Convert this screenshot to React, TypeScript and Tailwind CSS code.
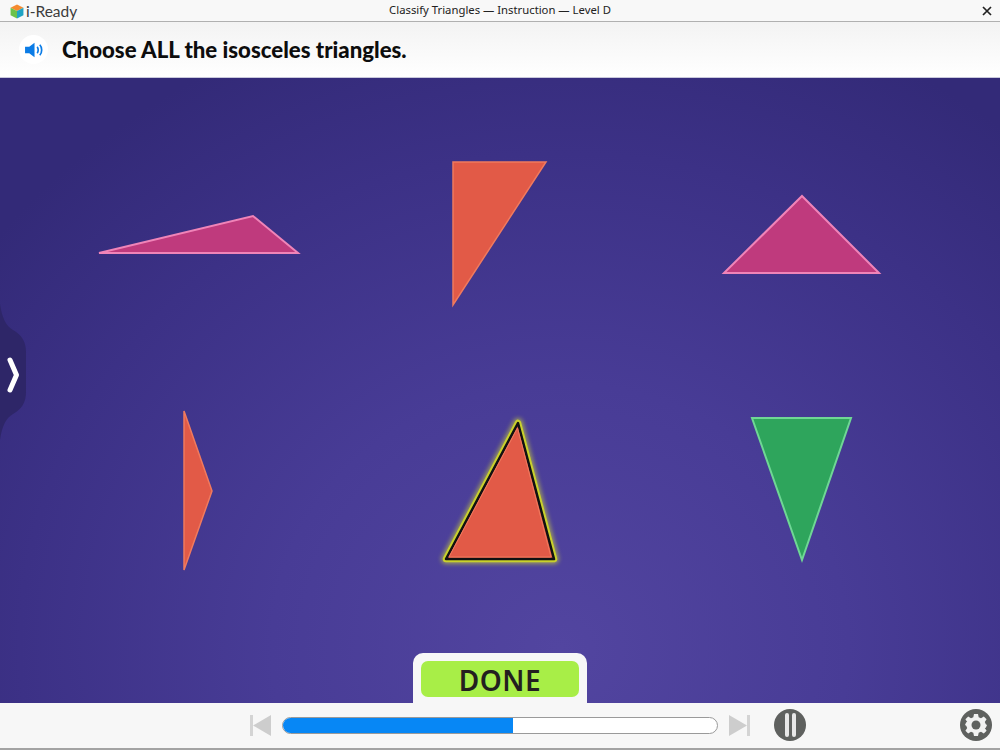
const App = () => {
  return (
    <div className="flex h-[750px] w-[1000px] flex-col overflow-hidden bg-[#f7f7f7] font-['Noto_Sans',sans-serif]">
      <TitleBar />
      <Prompt />
      <main className="relative flex-1 bg-[radial-gradient(ellipse_720px_660px_at_560px_570px,#5245a0_0%,#483c96_40%,#3c3186_75%,#332a78_100%)]">
        <Shapes />
        <SideTab />
        <div className="absolute bottom-0 left-[413px] h-[50px] w-[174px] rounded-t-[10px] bg-[#f7f7f7] px-2 pt-2">
          <button className="flex h-9 w-full items-center justify-center rounded-[7px] bg-[#a8ee47] pt-0.5 text-[28px] font-semibold tracking-[0.5px] text-[#231f20]">
            DONE
          </button>
        </div>
      </main>
      <Footer />
    </div>
  );
};

const TitleBar = () => (
  <header className="relative flex h-[22px] shrink-0 items-center justify-center border-b border-[#b0b0b0] bg-[#f8f8f8]">
    <div className="absolute left-[10px] top-[3px] flex items-center gap-[2px]">
      <svg width="14" height="15" viewBox="0 0 13 14">
        <path d="M6.5 0.5 12.5 3.5 6.5 6.5 0.5 3.5Z" fill="#f58a2e" />
        <path d="M0.5 3.5 6.5 6.5V13.5L0.5 10.5Z" fill="#6cc24a" />
        <path d="M12.5 3.5 6.5 6.5V13.5L12.5 10.5Z" fill="#1fa3c4" />
      </svg>
      <span className="font-['Lato',sans-serif] text-[15.500px] leading-[16px] text-[#3c3c3c]">i-Ready</span>
    </div>
    <span className="text-[11.300px] text-[#222]">Classify Triangles — Instruction — Level D</span>
    <svg className="absolute right-[8px] top-[6px]" width="10" height="10" viewBox="0 0 10 10">
      <path d="M1 1 9 9M9 1 1 9" stroke="#222" strokeWidth="1.7" />
    </svg>
  </header>
);

const Prompt = () => (
  <section className="flex h-[56px] shrink-0 items-center border-b border-[#c9c9dc] bg-gradient-to-b from-[#f3f3f3] to-white pl-[19px]">
    <div className="flex h-[29px] w-[29px] items-center justify-center rounded-full bg-white">
      <svg width="20" height="18" viewBox="0 0 19 16">
        <path d="M1 5H5L10 1V15L5 11H1Z" fill="#0b7ce6" />
        <path d="M12.5 5C13.8 6.5 13.8 9.5 12.5 11" fill="none" stroke="#0b7ce6" strokeWidth="1.6" />
        <path d="M15 3C17.4 5.5 17.4 10.500 15 13" fill="none" stroke="#0b7ce6" strokeWidth="1.6" />
      </svg>
    </div>
    <h1 className="ml-[14px] font-['Lato',sans-serif] text-[22.200px] font-black text-[#0d0d0d]">
      Choose ALL the isosceles triangles.
    </h1>
  </section>
);

const Shapes = () => (
  <svg className="absolute inset-0 h-full w-full" viewBox="0 78 1000 625">
    <polygon points="99,253 253,216 298,253" fill="#bf3a7d" stroke="#f084b8" strokeWidth="2" />
    <polygon points="453,162 546,162 453,305" fill="#e25a47" stroke="#f07a5e" strokeWidth="1.5" />
    <polygon points="802,196 879,273 724,273" fill="#bf3a7d" stroke="#f084b8" strokeWidth="2" />
    <polygon points="184,411 212,491 184,570" fill="#e25a47" stroke="#f07a5e" strokeWidth="1.5" />
    <polygon points="752,418 851,418 802,560" fill="#2ea55c" stroke="#6fd795" strokeWidth="2" />
    <polygon points="518,423 554,559 446,559" fill="none" stroke="#d8e02f" strokeWidth="10" strokeLinejoin="round" opacity="0.55" style={{ filter: "blur(2px)" }} />
    <polygon points="518,423 554,559 446,559" fill="none" stroke="#c9d12c" strokeWidth="6.500" strokeLinejoin="round" />
    <polygon points="518,423 554,559 446,559" fill="#e25a47" stroke="#111" strokeWidth="2.5" strokeLinejoin="round" />
    <polygon points="517.500,428 551,557 449,557" fill="none" stroke="#f07a5e" strokeWidth="1" />
  </svg>
);

const SideTab = () => (
  <svg className="absolute left-0 top-[226px]" width="26" height="136" viewBox="0 0 26 136">
    <path d="M0 0C2 14 6 22 13 26 22 31 26 38 26 48V88C26 98 22 105 13 110 6 114 2 122 0 136Z" fill="#2e2668" />
    <path d="M10 56 16.500 71 10 86" fill="none" stroke="#fff" strokeWidth="5" strokeLinecap="round" strokeLinejoin="round" />
  </svg>
);

const Footer = () => (
  <footer className="relative flex h-[47px] shrink-0 items-center border-b-2 border-[#a3a3a3] bg-[#f7f7f7] pb-px pl-[250px] pr-[8px]">
    <svg width="21" height="21" viewBox="0 0 21 21">
      <path d="M0 0H3V21H0Z" fill="#d4d4d4" />
      <path d="M21 0V21L3 10.500Z" fill="#cdcdcd" />
    </svg>
    <div className="ml-[11px] h-[17px] w-[436px] overflow-hidden rounded-full border border-[#9a9a9a] bg-white">
      <div className="h-full w-[230px] bg-[#0787f5]" />
    </div>
    <svg className="ml-[11px]" width="21" height="21" viewBox="0 0 21 21">
      <path d="M0 0V21L18 10.500Z" fill="#cdcdcd" />
      <path d="M18 0H21V21H18Z" fill="#d4d4d4" />
    </svg>
    <div className="ml-[24px] flex h-8 w-8 items-center justify-center gap-[3px] rounded-full bg-[#5f615f]">
      <span className="h-[24px] w-[4px] rounded-full bg-[#e8e8e8]" />
      <span className="h-[24px] w-[4px] rounded-full bg-[#e8e8e8]" />
    </div>
    <svg className="ml-auto" width="32" height="32" viewBox="0 0 32 32">
      <circle cx="16" cy="16" r="16" fill="#5f615f" />
      <path
        d="M14 5H18L18.700 8.200 21 9.200 23.800 7.400 26.600 10.200 24.800 13 25.800 15.300 27 16 25.800 18.700 24.800 19 26.600 21.800 23.800 24.600 21 22.800 18.700 23.800 18 27H14L13.300 23.800 11 22.800 8.200 24.600 5.400 21.800 7.200 19 6.200 16.700 5 16 6.200 13.300 7.200 13 5.400 10.200 8.200 7.400 11 9.200 13.300 8.200Z"
        fill="#f2f2f2"
      />
      <circle cx="16" cy="16" r="4.500" fill="#5f615f" />
    </svg>
  </footer>
);

export default App;
